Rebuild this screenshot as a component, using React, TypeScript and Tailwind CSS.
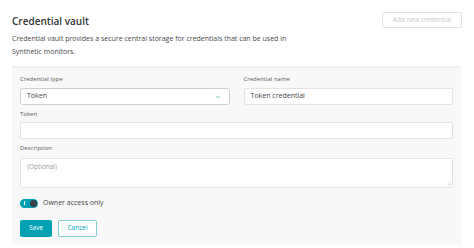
import { useState } from "react"

export default function App() {
  const [owner, setOwner] = useState(true)

  return (
    <div className="w-[474px] h-[248px] bg-white overflow-hidden text-[#454646]" style={{ fontFamily: "'Open Sans', sans-serif" }}>
      {/* Header */}
      <div className="flex items-start justify-between pl-[12px] pr-[12px] pt-[12px]">
        <h1 className="text-[10px] font-semibold leading-[16px] text-[#353535] mt-[1px]">Credential vault</h1>
        <button className="h-[16px] w-[80px] border border-[#e2e2e2] rounded-[2px] text-[6.5px] text-[#c9c9c9] bg-white">
          Add new credential
        </button>
      </div>

      <p className="px-[12px] mt-[3px] text-[7px] leading-[13px] text-[#4a4a4a] w-[300px]">
        Credential vault provides a secure central storage for credentials that can be used in Synthetic monitors.
      </p>

      {/* Form panel */}
      <div className="ml-[12px] mt-[8px] w-[449px] h-[179px] bg-[#f8f8f8] border-t-2 border-[#f1f1f1] px-[8px] pt-[6px]">
        <div className="grid grid-cols-2 gap-x-[14px]">
          <div>
            <label className="block text-[6px] leading-[10px] text-[#5a5a5a]">Credential type</label>
            <div className="mt-[4px] h-[17px] bg-white border border-[#cfcfcf] rounded-[3px] flex items-center justify-between pl-[6px] pr-[8px]">
              <span className="text-[7px]">Token</span>
              <svg width="6" height="4" viewBox="0 0 6 4" className="text-[#6fb8c2]">
                <path d="M0.8 0.9 L3 3 L5.2 0.9" fill="none" stroke="currentColor" strokeWidth="0.8" />
              </svg>
            </div>
          </div>
          <div>
            <label className="block text-[6px] leading-[10px] text-[#5a5a5a]">Credential name</label>
            <div className="mt-[4px] h-[17px] bg-white border border-[#e3e3e3] rounded-[2px] flex items-center pl-[6px]">
              <span className="text-[7px]">Token credential</span>
            </div>
          </div>
        </div>

        <label className="block mt-[4px] text-[6px] leading-[10px] text-[#5a5a5a]">Token</label>
        <div className="mt-[3px] h-[17px] bg-white border border-[#e3e3e3] rounded-[2px]" />

        <label className="block mt-[4px] text-[6px] leading-[10px] text-[#5a5a5a]">Description</label>
        <div className="relative mt-[5px] h-[30px] bg-white border border-[#e3e3e3] rounded-[2px] px-[6px] pt-[4px]">
          <span className="block text-[6.5px] leading-[8px] text-[#9a9a9a]">(Optional)</span>
          <svg width="4" height="4" viewBox="0 0 4 4" className="absolute right-[1px] bottom-[1px]">
            <path d="M0.5 3.8 L3.8 0.5 M2 3.8 L3.8 2" stroke="#b5b5b5" strokeWidth="0.6" />
          </svg>
        </div>

        <div className="flex items-center mt-[10px] gap-[5px]">
          <button
            onClick={() => setOwner(!owner)}
            className="relative w-[18px] h-[9px] rounded-full bg-[#00a1b2]"
          >
            <span className="absolute left-[4px] top-[2.5px] w-[1px] h-[4px] bg-white" />
            <span className="absolute right-[1px] top-[1px] w-[7px] h-[7px] rounded-full bg-[#3b3f46]" />
          </button>
          <span className="text-[7px] text-[#454646]">Owner access only</span>
        </div>

        <div className="flex mt-[11px] gap-[6px]">
          <button className="h-[17px] w-[32px] bg-[#00a1b2] rounded-[2px] text-white text-[6.5px]">Save</button>
          <button className="h-[17px] w-[39px] bg-white border border-[#7fcfd8] rounded-[2px] text-[#00a1b2] text-[6.5px]">Cancel</button>
        </div>
      </div>
    </div>
  )
}
